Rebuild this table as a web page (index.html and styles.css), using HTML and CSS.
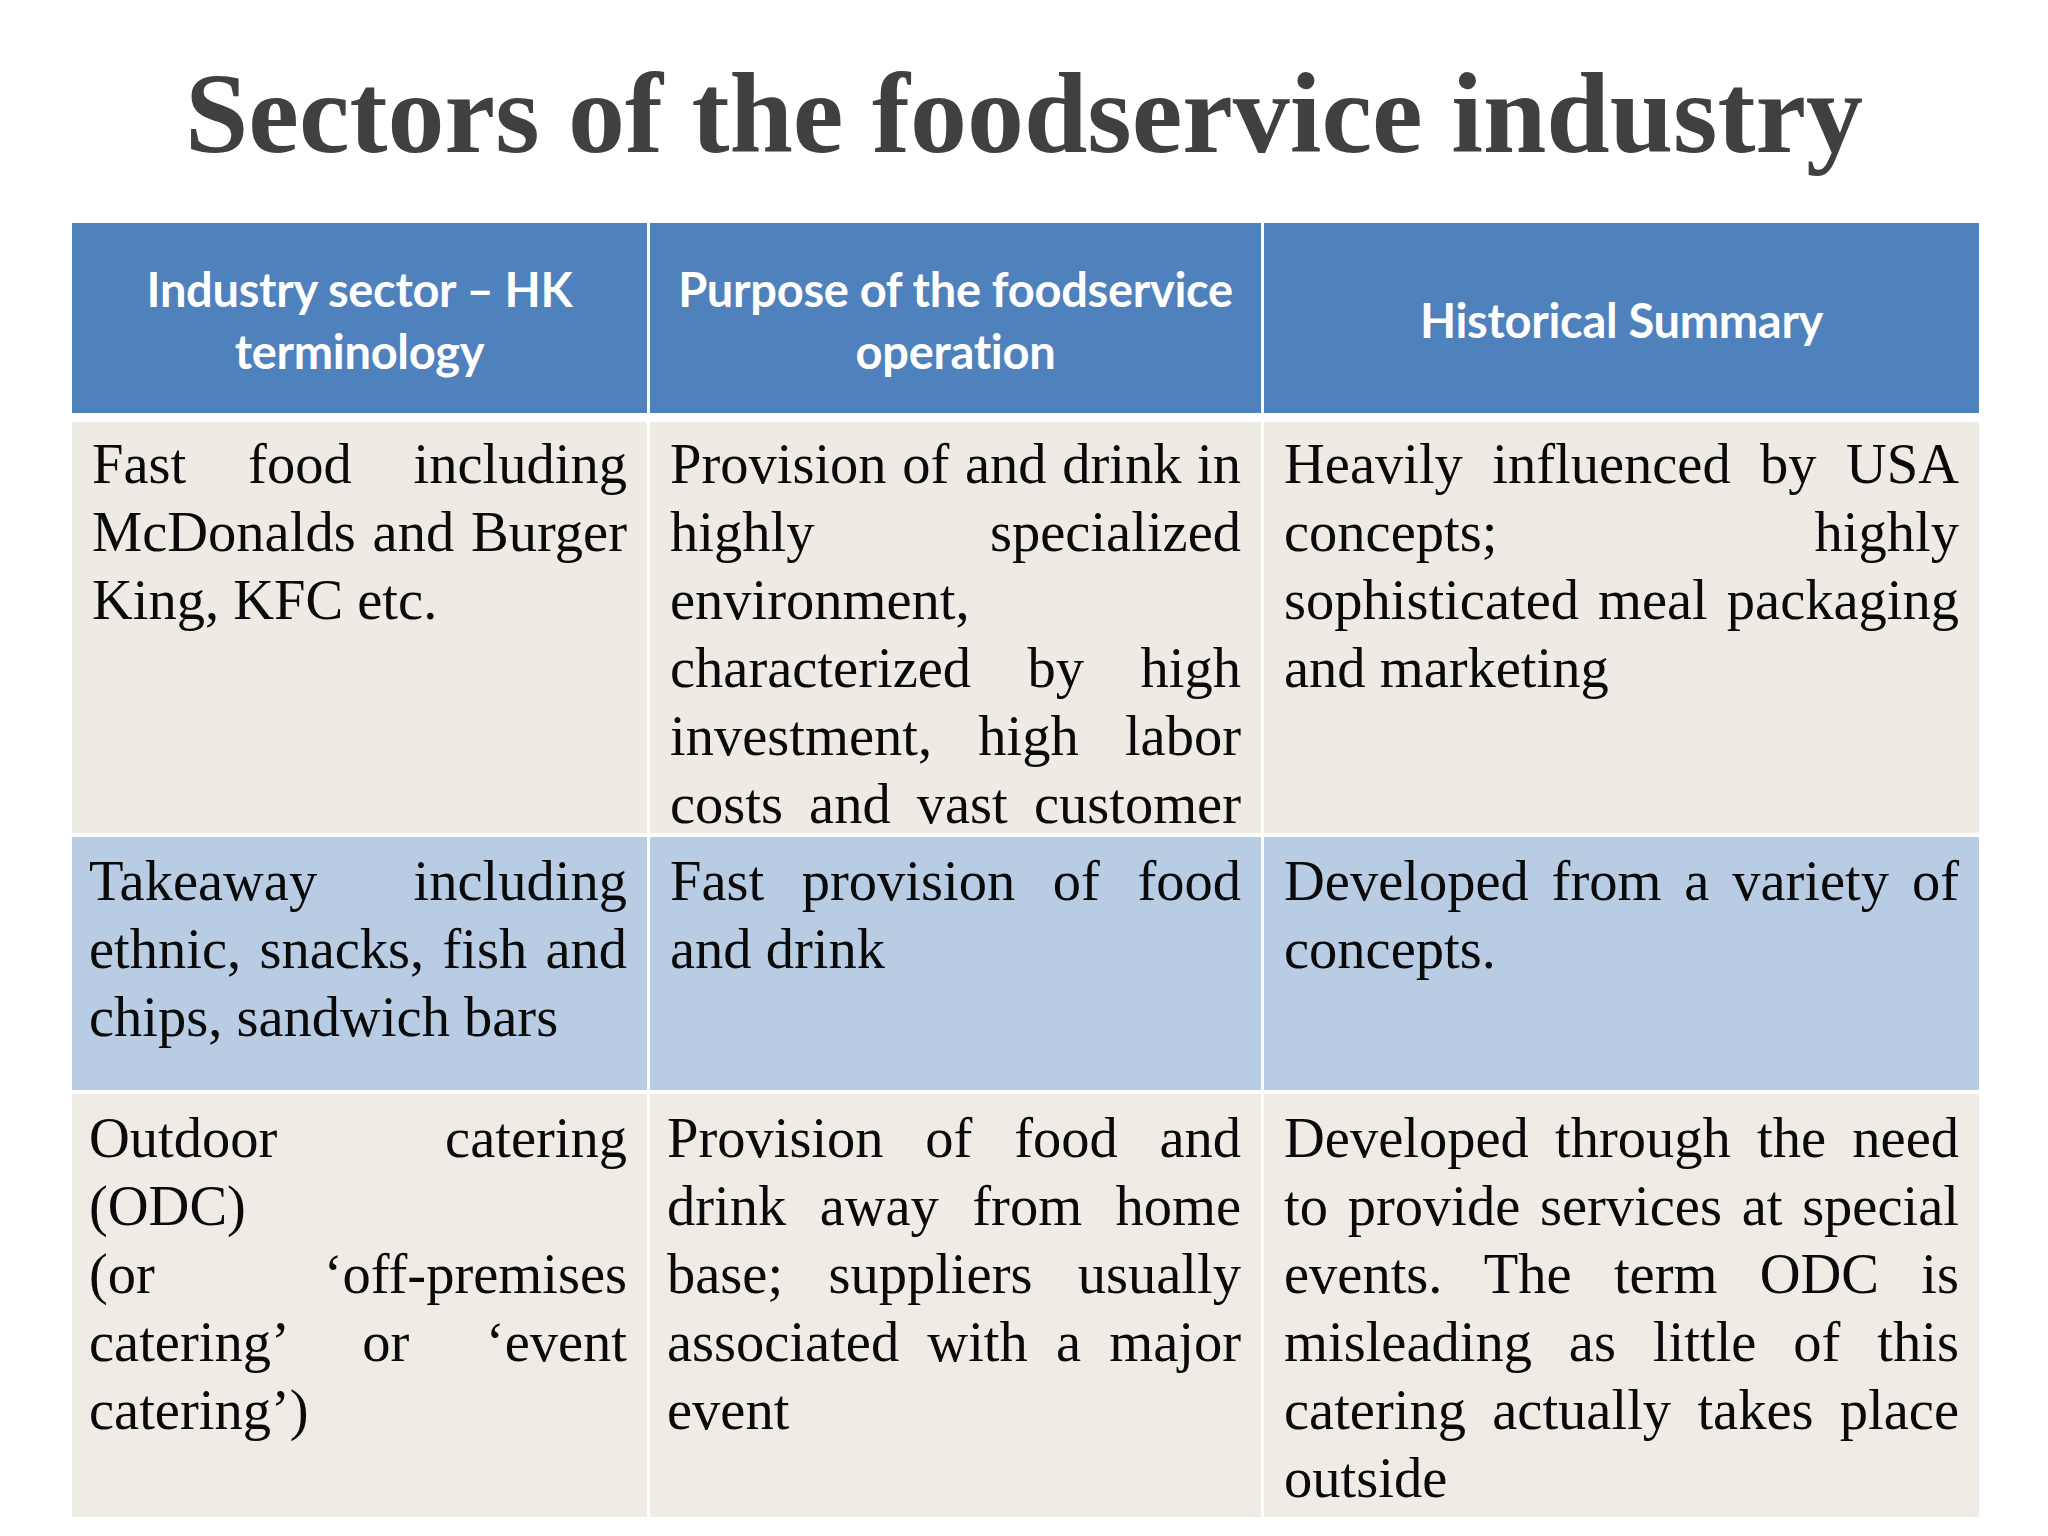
FILE: index.html
```html
<!DOCTYPE html>
<html lang="en">
<head>
<meta charset="utf-8">
<title>Sectors of the foodservice industry</title>
<link rel="stylesheet" href="styles.css">
</head>
<body>
<div class="slide">
  <h1 class="title">Sectors of the foodservice industry</h1>
  <div class="table">
    <div class="row head">
      <div class="cell">Industry sector – HK<br>terminology</div>
      <div class="cell">Purpose of the foodservice<br>operation</div>
      <div class="cell">Historical Summary</div>
    </div>
    <div class="row r1">
      <div class="cell">
        <span class="ln">Fast food including</span>
        <span class="ln">McDonalds and Burger</span>
        <span class="ln last">King, KFC etc.</span>
      </div>
      <div class="cell">
        <span class="ln">Provision of and drink in</span>
        <span class="ln">highly specialized</span>
        <span class="ln">environment,</span>
        <span class="ln">characterized by high</span>
        <span class="ln">investment, high labor</span>
        <span class="ln tight">costs and vast customer</span>
      </div>
      <div class="cell">
        <span class="ln">Heavily influenced by USA</span>
        <span class="ln">concepts; highly</span>
        <span class="ln">sophisticated meal packaging</span>
        <span class="ln last">and marketing</span>
      </div>
    </div>
    <div class="row r2">
      <div class="cell">
        <span class="ln">Takeaway including</span>
        <span class="ln">ethnic, snacks, fish and</span>
        <span class="ln last">chips, sandwich bars</span>
      </div>
      <div class="cell">
        <span class="ln">Fast provision of food</span>
        <span class="ln last">and drink</span>
      </div>
      <div class="cell">
        <span class="ln">Developed from a variety of</span>
        <span class="ln last">concepts.</span>
      </div>
    </div>
    <div class="row r3">
      <div class="cell">
        <span class="ln">Outdoor catering</span>
        <span class="ln">(ODC)</span>
        <span class="ln">(or ‘off-premises</span>
        <span class="ln">catering’ or ‘event</span>
        <span class="ln last">catering’)</span>
      </div>
      <div class="cell">
        <span class="ln">Provision of food and</span>
        <span class="ln">drink away from home</span>
        <span class="ln">base; suppliers usually</span>
        <span class="ln">associated with a major</span>
        <span class="ln last">event</span>
      </div>
      <div class="cell">
        <span class="ln">Developed through the need</span>
        <span class="ln">to provide services at special</span>
        <span class="ln">events. The term ODC is</span>
        <span class="ln">misleading as little of this</span>
        <span class="ln">catering actually takes place</span>
        <span class="ln last">outside</span>
      </div>
    </div>
  </div>
</div>
</body>
</html>
```
FILE: styles.css
```css
html, body {
  margin: 0;
  padding: 0;
  background: #ffffff;
}

.slide {
  width: 2048px;
  height: 1536px;
  overflow: hidden;
}

.title {
  margin: 57px 0 0 0;
  height: 114px;
  font-family: "Liberation Serif", "Times New Roman", serif;
  font-weight: bold;
  font-size: 114px;
  line-height: 114px;
  color: #404040;
  text-align: center;
}

.table {
  margin: 52px 0 0 72px;
  width: 1907px;
}

.row {
  display: grid;
  grid-template-columns: 575px 611px 715px;
  column-gap: 3px;
}

.head {
  height: 190px;
  margin-bottom: 9px;
}

.head .cell {
  background: #4f81bd;
  color: #ffffff;
  font-family: Lato, "Open Sans", sans-serif;
  font-weight: bold;
  font-size: 47px;
  line-height: 62px;
  letter-spacing: -0.3px;
  text-align: center;
  display: flex;
  align-items: center;
  justify-content: center;
  padding-top: 4px;
  box-sizing: border-box;
}

.r1, .r2, .r3 {
  font-family: "Liberation Serif", "Times New Roman", serif;
  font-size: 56.5px;
  line-height: 68px;
  color: #0a0a0a;
}

.r1 .cell,
.r2 .cell,
.r3 .cell {
  padding: 10px 20px 0 20px;
  box-sizing: border-box;
}

.r2 .cell:first-child,
.r3 .cell:first-child {
  padding-left: 17px;
}

.r3 .cell:nth-child(2) {
  padding-left: 17px;
}

.r1 {
  height: 411px;
  margin-bottom: 4px;
}

.r1 .cell {
  background: #edebe3;
  padding-top: 8px;
}

.r2 {
  height: 253px;
  margin-bottom: 4px;
}

.r2 .cell {
  background: #b8cce4;
}

.r3 {
  height: 423px;
}

.r3 .cell {
  background: #efebe5;
}

.ln {
  display: block;
  text-align: justify;
  text-align-last: justify;
}

.ln.last {
  text-align-last: left;
}

.ln.tight {
  line-height: 58px;
  padding-top: 5px;
}
```
